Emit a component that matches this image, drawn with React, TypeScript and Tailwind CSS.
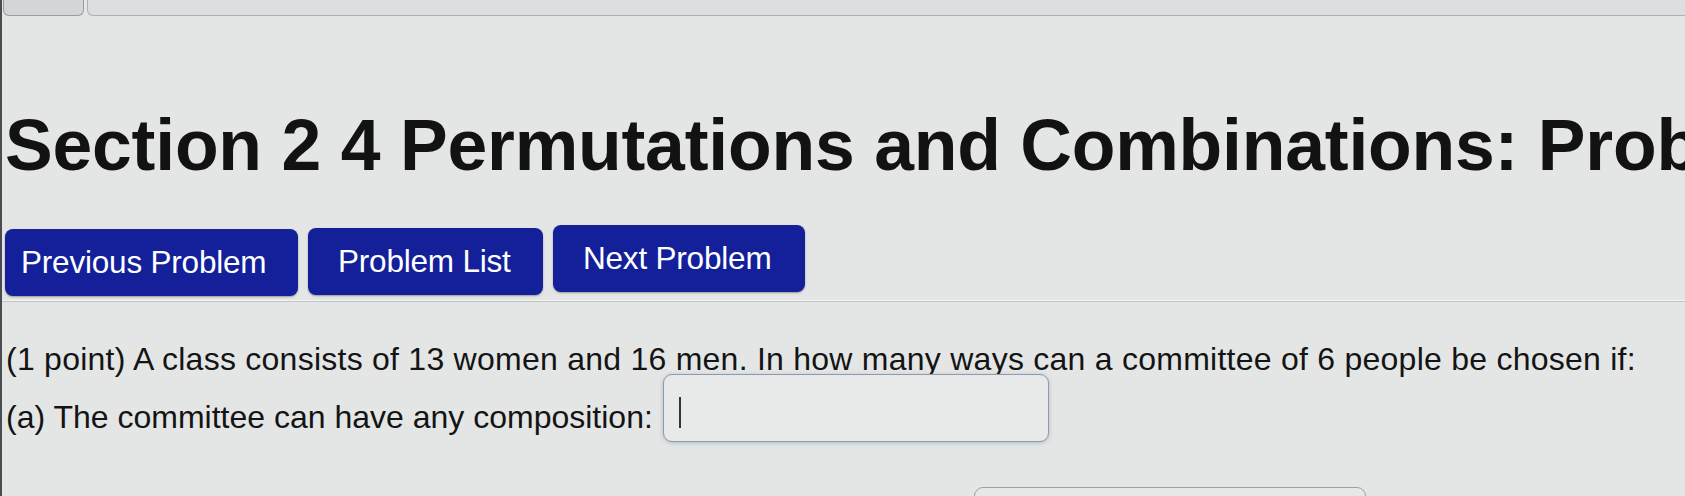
import React from 'react';

const NavButton: React.FC<{ label: string; w: string; pad: string; lift: string }> = ({ label, w, pad, lift }) => (
  <button
    className={`h-[67px] ${w} ${pad} ${lift} rounded-[8px] bg-[#13209a] text-white text-[31.5px] leading-none text-left tracking-[-0.2px] shadow-[0_1px_2px_rgba(0,0,0,0.35)]`}
  >
    {label}
  </button>
);

const App: React.FC = () => {
  return (
    <div
      className="w-[1685px] h-[496px] overflow-hidden bg-[#e4e6e6] border-l-2 border-[#4a4d50] text-[#141414]"
      style={{ fontFamily: '"Liberation Sans", Arial, Helvetica, sans-serif' }}
    >
      {/* tab strip at top */}
      <div className="flex gap-[3px] h-[16px]">
        <div className="w-[81px] h-full ml-[1px] rounded-b-[6px] border border-t-0 border-[#9a9c9e] bg-[#d3d5d6]" />
        <div className="flex-1 h-full rounded-bl-[6px] border border-t-0 border-r-0 border-[#aeb0b1] bg-[#dcdedf]" />
      </div>

      <div className="pl-[3px]">
        <h1 className="mt-[93px] h-[72px] text-[71.5px] leading-[72px] font-bold whitespace-nowrap text-[#121212] tracking-[-0.2px]">
          Section 2 4 Permutations and Combinations: Problem 4
        </h1>

        <div className="mt-[44px] flex items-start gap-[10px]">
          <NavButton label="Previous Problem" w="w-[293px]" pad="pl-[16px]" lift="mt-[4px]" />
          <NavButton label="Problem List" w="w-[235px]" pad="pl-[30px]" lift="mt-[3px]" />
          <NavButton label="Next Problem" w="w-[252px]" pad="pl-[30px]" lift="mt-0" />
        </div>
      </div>

      <div className="mt-[5px] border-t border-[#bfc2c3] shadow-[0_-1px_0_rgba(255,255,255,0.6)] pl-[4px]">
        <p className="mt-[38px] text-[32px] leading-[38px] tracking-[0.25px] whitespace-nowrap">
          (1 point) A class consists of 13 women and 16 men. In how many ways can a committee of 6 people be chosen if:
        </p>

        <div className="-mt-[4px] flex items-end">
          <span className="mb-[6px] text-[32px] leading-[38px] whitespace-nowrap">
            (a) The committee can have any composition:
          </span>
          <div className="ml-[10px] w-[386px] h-[68px] rounded-[9px] border-[1.5px] border-[#8b9cab] bg-[#e8eaea] shadow-[0_1px_4px_rgba(70,110,150,0.35)] flex items-center pl-[15px]">
            <div className="w-[2px] h-[31px] mt-[8px] bg-[#333]" />
          </div>
        </div>

        <div className="mt-[45px] ml-[968px] w-[392px] h-[60px] rounded-[9px] border-[1.5px] border-[#9c9fa1] bg-[#e6e8e8]" />
      </div>
    </div>
  );
};

export default App;
